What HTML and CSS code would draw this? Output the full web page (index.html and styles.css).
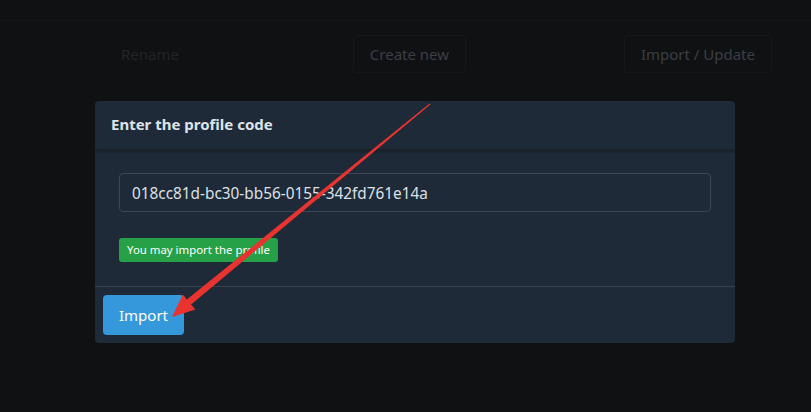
FILE: index.html
```html
<!DOCTYPE html>
<html lang="en">
<head>
    <meta charset="UTF-8">
    <meta name="viewport" content="width=device-width, initial-scale=1.0">
    <title>Profile import</title>
    <link rel="stylesheet" href="styles.css">
</head>
<body>
    <div class="top-line"></div>

    <div class="toolbar">
        <button class="tool-btn tool-btn-plain">Rename</button>
        <button class="tool-btn">Create new</button>
        <button class="tool-btn">Import / Update</button>
    </div>

    <div class="modal">
        <div class="modal-header">
            <h2>Enter the profile code</h2>
        </div>
        <div class="modal-body">
            <input class="code-input" type="text" value="018cc81d-bc30-bb56-0155-342fd761e14a">
            <span class="badge-ok">You may import the profile</span>
        </div>
        <div class="modal-footer">
            <button class="import-btn">Import</button>
        </div>
    </div>

    <svg class="pointer-arrow" width="811" height="412" viewBox="0 0 811 412">
        <polygon fill="#e8332f"
            points="172,317 182.8,294.6 186.9,299.4 429.6,103.6 430.4,104.4 191.1,304.6 195.4,309.4"/>
    </svg>
</body>
</html>
```

FILE: styles.css
```css
* {
    box-sizing: border-box;
    margin: 0;
    padding: 0;
}

body {
    font-family: "Noto Sans", "Open Sans", sans-serif;
    background-color: #0f1113;
    width: 811px;
    height: 412px;
    overflow: hidden;
    position: relative;
}

.top-line {
    height: 21px;
    border-bottom: 1px solid #14171a;
}

.toolbar {
    display: flex;
    justify-content: space-between;
    width: 772px;
    padding-left: 105px;
    margin-top: 14px;
}

.tool-btn {
    font-family: inherit;
    font-size: 15px;
    color: #3b3f44;
    background: none;
    border: 1px solid #15181b;
    border-radius: 3px;
    height: 38px;
    padding: 0 16px;
}

.tool-btn-plain {
    border-color: transparent;
    color: #222528;
    width: 90px;
    padding: 0;
}

.modal {
    width: 640px;
    margin: 28px 0 0 95px;
    background: #1f2a38;
    border-radius: 4px;
    overflow: hidden;
}

.modal-header {
    height: 50px;
    padding: 0 16px;
    display: flex;
    align-items: center;
    border-bottom: 2px solid #19222d;
    box-shadow: 0 1px 2px rgba(0,0,0,0.25);
}

.modal-header h2 {
    font-size: 15px;
    font-weight: bold;
    color: #dde3ea;
    margin-top: -2px;
}

.modal-body {
    padding: 22px 24px 24px;
    display: flex;
    flex-direction: column;
    align-items: flex-start;
    gap: 26px;
    border-bottom: 1px solid #36434f;
}

.code-input {
    width: 592px;
    height: 39px;
    padding: 0 12px;
    font-family: inherit;
    font-size: 15.35px;
    color: #dbe1e7;
    background: #1f2a38;
    border: 1px solid #3a4756;
    border-radius: 4px;
    outline: none;
}

.badge-ok {
    background: #27a148;
    color: #ffffff;
    font-size: 11.4px;
    height: 24px;
    line-height: 24px;
    padding: 0 8px;
    border-radius: 3px;
}

.modal-footer {
    padding: 8px;
}

.import-btn {
    font-family: inherit;
    font-size: 15px;
    color: #ffffff;
    background: #3498db;
    border: none;
    border-radius: 4px;
    width: 81px;
    height: 40px;
}

.pointer-arrow {
    position: absolute;
    left: 0;
    top: 0;
    pointer-events: none;
}
```
